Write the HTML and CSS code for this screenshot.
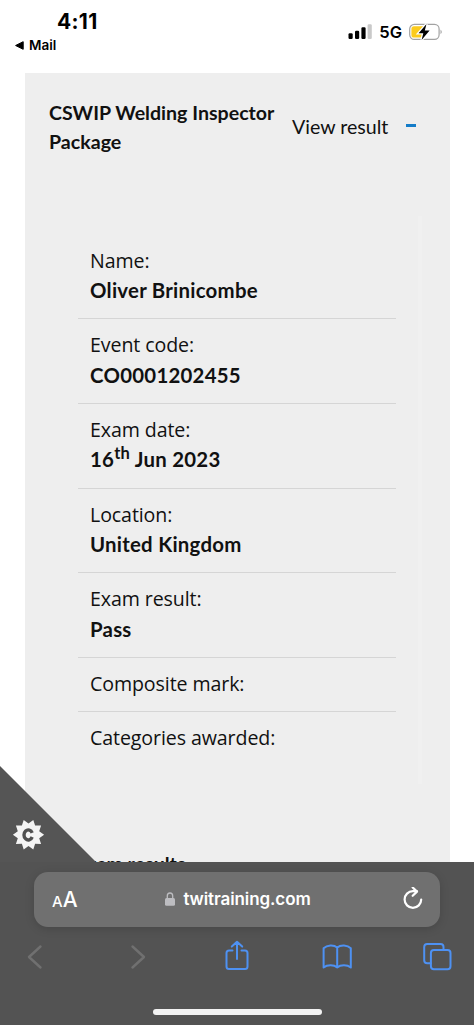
FILE: index.html
```html
<!DOCTYPE html>
<html lang="en">
<head>
    <meta charset="UTF-8">
    <meta name="viewport" content="width=device-width, initial-scale=1.0">
    <title>Exam results</title>
    <link rel="stylesheet" href="styles.css">
</head>
<body>
    <div class="phone">
        <header class="status-bar">
            <div class="status-left">
                <div class="time">4:11</div>
                <div class="back-app">
                    <svg width="9" height="9" viewBox="0 0 9 9"><path d="M8.2.7v7.6L.6 4.5z" fill="#000" stroke="#000" stroke-linejoin="round"/></svg>
                    <span>Mail</span>
                </div>
            </div>
            <div class="status-right">
                <svg class="signal" width="25" height="16" viewBox="0 0 25 16">
                    <rect x="0.5" y="9.3" width="4.2" height="5.7" rx="1.2"/>
                    <rect x="7" y="6.7" width="4.2" height="8.3" rx="1.2"/>
                    <rect x="13.4" y="3.3" width="4.2" height="11.7" rx="1.2"/>
                    <rect x="19.6" y="0.3" width="4.2" height="14.7" rx="1.2" fill="#c9c9c9"/>
                </svg>
                <span class="network">5G</span>
                <svg class="battery" width="34" height="18" viewBox="0 0 34 18">
                    <rect x="0.7" y="1.4" width="29.4" height="15" rx="4.6" fill="#fff" stroke="#a2a2a2" stroke-width="1.2"/>
                    <path d="M5 3.2h11v11.4H5a2.6 2.6 0 0 1-2.6-2.6V5.8A2.6 2.6 0 0 1 5 3.2z" fill="#fbcb1d"/>
                    <path d="M31.6 6.5q2 2.4 0 4.8z" fill="#888"/>
                    <path d="M17.5 1L9.6 10.2h4.7L12.6 16.9l8-9.4h-4.8z" fill="#000" stroke="#fff" stroke-width="2.6" paint-order="stroke"/>
                </svg>
            </div>
        </header>

        <main class="page">
            <section class="card">
                <div class="card-header">
                    <h2>CSWIP Welding Inspector Package</h2>
                    <span class="view-result">View result</span>
                    <span class="minus"></span>
                </div>
                <div class="details">
                    <div class="row"><span>Name:</span><strong>Oliver Brinicombe</strong></div>
                    <div class="row"><span>Event code:</span><strong>CO0001202455</strong></div>
                    <div class="row"><span>Exam date:</span><strong>16<sup>th</sup> Jun 2023</strong></div>
                    <div class="row"><span>Location:</span><strong>United Kingdom</strong></div>
                    <div class="row"><span>Exam result:</span><strong>Pass</strong></div>
                    <div class="row"><span>Composite mark:</span></div>
                    <div class="row"><span>Categories awarded:</span></div>
                </div>
                <h3>My exam results</h3>
            </section>

            <!-- cookie settings corner -->
            <div class="cookie-corner">
                <svg width="98" height="98" viewBox="0 0 98 98">
                    <path d="M0 0L98 98H0z" fill="#555"/>
                    <path d="M44.1 68.7L39.2 65.2L41.1 59.5L35.1 59.6L33.3 53.9L28.5 57.4L23.7 53.9L21.9 59.6L15.9 59.5L17.8 65.2L12.9 68.7L17.8 72.2L15.9 77.9L21.9 77.8L23.7 83.5L28.5 80L33.3 83.5L35.1 77.8L41.1 77.9L39.2 72.2z" fill="#f4f4f4"/>
                    <path d="M32.2 66.8A4.3 5 0 1 0 32.2 71" fill="none" stroke="#505050" stroke-width="3.4"/>
                </svg>
            </div>
        </main>

        <footer class="browser-bar">
            <div class="address">
                <div class="text-size"><small>A</small>A</div>
                <div class="url">
                    <svg width="10" height="14" viewBox="0 0 10 14"><path d="M2.3 6.5V3.9a2.7 2.9 0 0 1 5.4 0v2.6" fill="none" stroke="#bdbdc1" stroke-width="1.3"/><rect y="5.9" width="10" height="7.8" rx="1.5" fill="#bdbdc1"/></svg>
                    <span>twitraining.com</span>
                </div>
                <svg class="reload" width="20" height="24" viewBox="0 0 20 24" fill="none" stroke="#fff" stroke-width="2.2" stroke-linecap="round" stroke-linejoin="round"><path d="M18.2 12.5A8.3 8.3 0 1 1 9.9 4.2H14M9.7 .5L14 4.6L9.7 8.8"/></svg>
            </div>
            <nav class="toolbar">
                <svg width="32" height="32" viewBox="0 0 32 32"><path d="M20.5 6.500L9 17L20.500 27.500"/></svg>
                <svg width="32" height="32" viewBox="0 0 32 32"><path d="M11.500 6.500L23 17L11.500 27.500"/></svg>
                <svg width="32" height="32" viewBox="0 0 32 32"><path d="M11.500 10.500H8a2.500 2.500 0 0 0-2.500 2.500V26.500A2.500 2.500 0 0 0 8 29H24a2.500 2.500 0 0 0 2.500-2.500V13A2.500 2.500 0 0 0 24 10.500H20.500M16 19V1.900M10.800 6.600L16 1.700L21.200 6.600"/></svg>
                <svg width="32" height="32" viewBox="0 0 32 32"><path d="M15.200 7.600C12 4.400 5 4.800 1.600 8.200V27.500C5.200 24.600 12 24.600 15.200 27.500C18.500 24.600 25.200 24.600 28.800 27.500V8.200C25.500 4.800 18.500 4.400 15.200 7.600V27.500"/></svg>
                <svg width="32" height="32" viewBox="0 0 32 32"><rect x="8.900" y="10" width="19.600" height="19.200" rx="3"/><path d="M8.700 23.200H5.200a3 3 0 0 1-3-3V7a3 3 0 0 1 3-3H18.500a3 3 0 0 1 3 3V10"/></svg>
            </nav>
            <div class="home-indicator"></div>
        </footer>
    </div>
</body>
</html>
```

FILE: styles.css
```css
* {
    box-sizing: border-box;
}
body {
    margin: 0;
    background: #fff;
    color: #111;
    overflow: hidden;
}
svg {
    display: block;
    flex: none;
}
.phone {
    width: 474px;
    height: 1025px;
    display: flex;
    flex-direction: column;
    overflow: hidden;
}

/* status bar */
.status-bar {
    height: 73px;
    flex: none;
    display: flex;
    justify-content: space-between;
    padding: 10px 31px 0 15px;
    font-family: Inter, sans-serif;
    color: #000;
}
.time {
    padding-left: 42px;
    font-size: 21px;
    font-weight: 700;
    line-height: 24px;
    letter-spacing: 0.3px;
}
.back-app {
    display: flex;
    align-items: center;
    gap: 5px;
    margin-top: 2px;
    font-size: 13.5px;
    font-weight: 600;
    line-height: 18px;
}
.status-right {
    display: flex;
    align-items: center;
    height: 44px;
}
.network {
    margin: 0 7px 0 6px;
    font-size: 16.5px;
    font-weight: 600;
}

/* result card */
.page {
    position: relative;
    height: 789px;
    flex: none;
    overflow: hidden;
    padding: 0 24.5px;
}
.card {
    height: 830px;
    padding: 25px 28px 0 24.5px;
    background: #eee;
}
.card-header {
    display: flex;
    align-items: center;
    height: 58px;
    font-family: Lato, sans-serif;
    font-size: 19.6px;
}
.card-header h2 {
    width: 243px;
    margin: 0;
    font-size: 19.6px;
    font-weight: 700;
    line-height: 29px;
}
.view-result {
    margin-top: -2px;
    white-space: nowrap;
}
.minus {
    width: 10px;
    height: 3px;
    margin: -4px 0 0 18px;
    background: #147cc8;
}
.details {
    height: 568px;
    margin-top: 60px;
    padding: 18.8px 22px 0 28.5px;
    border-right: 4px solid #f0f0f0;
}
.row {
    display: flex;
    flex-direction: column;
    padding: 11px 0 12.2px 12.5px;
    border-bottom: 1px solid #d5d5d5;
    font-family: "Open Sans", sans-serif;
    font-size: 19.6px;
    line-height: 30.2px;
}
.row:last-child {
    border-bottom: none;
}
.row span {
    letter-spacing: -0.1px;
}
.row strong {
    margin: -0.8px 0 0.8px;
    font-family: Lato, sans-serif;
    font-size: 20.4px;
    font-weight: 700;
    letter-spacing: 0.25px;
}
.row sup {
    font-size: 16.5px;
    line-height: 0;
}
.card h3 {
    margin: 65px 0 0 -6px;
    font-family: Lato, sans-serif;
    font-size: 19.6px;
    line-height: 30px;
}
.cookie-corner {
    position: absolute;
    left: 0;
    bottom: -2px;
}

/* browser chrome */
.browser-bar {
    flex: 1;
    display: flex;
    flex-direction: column;
    align-items: center;
    padding-top: 10px;
    background: #535353;
}
.address {
    display: flex;
    align-items: center;
    justify-content: space-between;
    width: 406px;
    height: 55px;
    padding: 0 17px 1px 18px;
    border-radius: 14px;
    background: #707070;
    box-shadow: 0 2px 10px rgba(0, 0, 0, 0.15);
    color: #fff;
    font-family: Inter, sans-serif;
}
.text-size {
    width: 26px;
    font-size: 21px;
    font-weight: 500;
    white-space: nowrap;
}
.text-size small {
    font-size: 15px;
}
.url {
    display: flex;
    align-items: center;
    gap: 8px;
    margin-right: 5px;
    font-size: 17px;
    font-weight: 600;
    letter-spacing: -0.1px;
}
.toolbar {
    display: flex;
    justify-content: space-between;
    width: 434px;
    margin-top: 13px;
}
.toolbar svg {
    fill: none;
    stroke: #4e91f2;
    stroke-width: 2;
    stroke-linecap: round;
    stroke-linejoin: round;
}
.toolbar svg:nth-child(-n+2) {
    stroke: #707070;
    stroke-width: 2.4;
}
.home-indicator {
    width: 169px;
    height: 6px;
    margin-top: 37px;
    border-radius: 3px;
    background: #f2f2f2;
}
```
